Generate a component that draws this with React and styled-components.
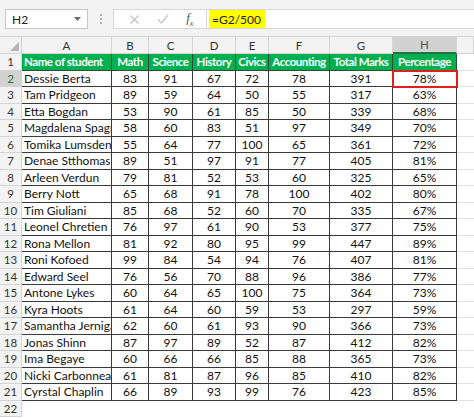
import React from 'react';
import styled, { createGlobalStyle } from 'styled-components';

const GlobalStyle = createGlobalStyle`
	html, body {
		margin: 0;
		padding: 0;
		background: #ffffff;
	}
	body {
		font-family: Lato, 'Open Sans', sans-serif;
	}
`;

const COLS = '22px 90px 37px 44px 43px 33px 61px 63px 64px 1fr';
const LETTERS = ['A', 'B', 'C', 'D', 'E', 'F', 'G', 'H'];
const HEAD = ['Name of student', 'Math', 'Science', 'History', 'Civics', 'Accounting', 'Total Marks', 'Percentage'];

const rows = [
	['Dessie Berta', 83, 91, 67, 72, 78, 391, '78%'],
	['Tam Pridgeon', 89, 59, 64, 50, 55, 317, '63%'],
	['Etta Bogdan', 53, 90, 61, 85, 50, 339, '68%'],
	['Magdalena Spagnolo', 58, 60, 83, 51, 97, 349, '70%'],
	['Tomika Lumsden', 55, 64, 77, 100, 65, 361, '72%'],
	['Denae Stthomas', 89, 51, 97, 91, 77, 405, '81%'],
	['Arleen Verdun', 79, 81, 52, 53, 60, 325, '65%'],
	['Berry Nott', 65, 68, 91, 78, 100, 402, '80%'],
	['Tim Giuliani', 85, 68, 52, 60, 70, 335, '67%'],
	['Leonel Chretien', 76, 97, 61, 90, 53, 377, '75%'],
	['Rona Mellon', 81, 92, 80, 95, 99, 447, '89%'],
	['Roni Kofoed', 99, 84, 54, 94, 76, 407, '81%'],
	['Edward Seel', 76, 56, 70, 88, 96, 386, '77%'],
	['Antone Lykes', 60, 64, 65, 100, 75, 364, '73%'],
	['Kyra Hoots', 61, 64, 60, 59, 53, 297, '59%'],
	['Samantha Jernigan', 62, 60, 61, 93, 90, 366, '73%'],
	['Jonas Shinn', 87, 97, 89, 52, 87, 412, '82%'],
	['Ima Begaye', 60, 66, 66, 85, 88, 365, '73%'],
	['Nicki Carbonneau', 61, 81, 87, 96, 85, 410, '82%'],
	['Cyrstal Chaplin', 66, 89, 93, 99, 76, 423, '85%'],
];

export default function App() {
	return (
		<>
			<GlobalStyle />
			<Sheet>
				<FormulaBar>
					<NameBox>
						<span>H2</span>
						<Caret>
							<svg width="7" height="4" viewBox="0 0 7 4">
								<path d="M0 0h7L3.5 4z" fill="#6b6b6b" />
							</svg>
						</Caret>
					</NameBox>
					<Grip>
						<i />
						<i />
						<i />
					</Grip>
					<FormulaTools>
						<svg width="11" height="11" viewBox="0 0 11 11">
							<path d="M1.5 1.5l8 8M9.5 1.5l-8 8" stroke="#c4c4c4" strokeWidth="1.3" />
						</svg>
						<svg width="12" height="10" viewBox="0 0 12 10">
							<path d="M1 5.5l3.5 3.5L11 1" stroke="#c4c4c4" strokeWidth="1.3" fill="none" />
						</svg>
						<Fx>
							f<sub>x</sub>
						</Fx>
					</FormulaTools>
					<FormulaInput>
						<Highlight>=G2/500</Highlight>
					</FormulaInput>
				</FormulaBar>
				<Grid>
					<Row $head>
						<Corner>
							<svg width="9" height="9" viewBox="0 0 9 9">
								<path d="M9 0v9H0z" fill="#b5b5b5" />
							</svg>
						</Corner>
						{LETTERS.map((l) => (
							<ColHead key={l} $active={l === 'H'}>
								{l}
							</ColHead>
						))}
						<ColHead />
					</Row>
					<Row>
						<RowHead>1</RowHead>
						{HEAD.map((h, i) => (
							<HeadCell key={h} $left={i === 0}>
								{h}
							</HeadCell>
						))}
						<Blank />
					</Row>
					{rows.map((r, ri) => (
						<Row key={r[0]}>
							<RowHead $active={ri === 0}>{ri + 2}</RowHead>
							{r.map((v, ci) => (
								<Cell key={ci} $left={ci === 0} $selected={ri === 0 && ci === 7}>
									{v}
								</Cell>
							))}
							<Blank />
						</Row>
					))}
					<Row>
						<RowHead>22</RowHead>
					</Row>
				</Grid>
			</Sheet>
		</>
	);
}

const Sheet = styled.div`
	width: 474px;
	height: 418px;
	overflow: hidden;
	background: #ffffff;
	font-family: Lato, 'Open Sans', sans-serif;
`;

const FormulaBar = styled.div`
	height: 37px;
	box-sizing: border-box;
	padding: 9px 0 7px 5px;
	display: flex;
	align-items: stretch;
	background: #f3f3f3;
	border-bottom: 1px solid #d4d4d4;
`;

const NameBox = styled.div`
	width: 83px;
	box-sizing: border-box;
	background: #fff;
	border: 1px solid #c6c6c6;
	display: flex;
	align-items: center;
	justify-content: space-between;
	padding: 0 6px 0 6px;
	font-size: 12px;
	color: #222;
`;

const Caret = styled.span`
	display: flex;
	align-items: center;
`;

const Grip = styled.div`
	width: 25px;
	display: flex;
	flex-direction: column;
	align-items: center;
	justify-content: center;
	gap: 2px;
	i {
		width: 2px;
		height: 2px;
		background: #b0b0b0;
	}
`;

const FormulaTools = styled.div`
	width: 93px;
	box-sizing: border-box;
	background: #fff;
	border: 1px solid #d6d6d6;
	border-right: none;
	display: flex;
	align-items: center;
	justify-content: space-around;
	padding: 0 4px 0 6px;
`;

const Fx = styled.span`
	font-family: 'Liberation Serif', serif;
	font-style: italic;
	font-size: 13px;
	color: #555;
	sub {
		font-size: 8px;
	}
`;

const FormulaInput = styled.div`
	flex: 1;
	background: #fff;
	border: 1px solid #d6d6d6;
	border-right: none;
	display: flex;
	align-items: stretch;
	padding-left: 2px;
`;

const Highlight = styled.span`
	background: #ffff00;
	display: flex;
	align-items: center;
	padding: 0 4px 0 3px;
	font-size: 12px;
	color: #222;
`;

const Grid = styled.div`
	display: flex;
	flex-direction: column;
`;

const Row = styled.div`
	display: grid;
	grid-template-columns: ${COLS};
	height: ${(p) => (p.$head ? '17px' : '16.5px')};
`;

const Corner = styled.div`
	background: #f3f3f3;
	border-right: 1px solid #d4d4d4;
	border-bottom: 1px solid #d4d4d4;
	display: flex;
	align-items: flex-end;
	justify-content: flex-end;
	padding: 0 2px 2px 0;
`;

const ColHead = styled.div`
	background: ${(p) => (p.$active ? '#d2d2d2' : '#f3f3f3')};
	border-right: 1px solid #d4d4d4;
	border-bottom: ${(p) => (p.$active ? '2px solid #217346' : '1px solid #d4d4d4')};
	display: flex;
	align-items: center;
	justify-content: center;
	font-size: 11.5px;
	color: ${(p) => (p.$active ? '#555' : '#333')};
`;

const RowHead = styled.div`
	background: ${(p) => (p.$active ? '#d2d2d2' : '#f3f3f3')};
	border-right: 1px solid #d4d4d4;
	border-bottom: 1px solid #d4d4d4;
	display: flex;
	align-items: center;
	justify-content: center;
	font-size: 11.5px;
	color: ${(p) => (p.$active ? '#217346' : '#333')};
`;

const Cell = styled.div`
	position: relative;
	box-sizing: border-box;
	border-right: 1px solid #3a3a3a;
	border-bottom: 1px solid #3a3a3a;
	display: flex;
	align-items: center;
	justify-content: ${(p) => (p.$left ? 'flex-start' : 'center')};
	padding-left: ${(p) => (p.$left ? '2px' : '0')};
	overflow: hidden;
	white-space: nowrap;
	font-size: 12px;
	color: #111;
	outline: ${(p) => (p.$selected ? '2px solid #e0201b' : 'none')};
	outline-offset: -1px;
`;

const HeadCell = styled(Cell)`
	background: #00b050;
	color: #ffffff;
	font-weight: 700;
	font-size: 11.5px;
	letter-spacing: -0.45px;
	border-right-color: #2f4a38;
	border-bottom-color: #2f4a38;
`;

const Blank = styled.div`
	border-bottom: 1px solid #e1e1e1;
`;
